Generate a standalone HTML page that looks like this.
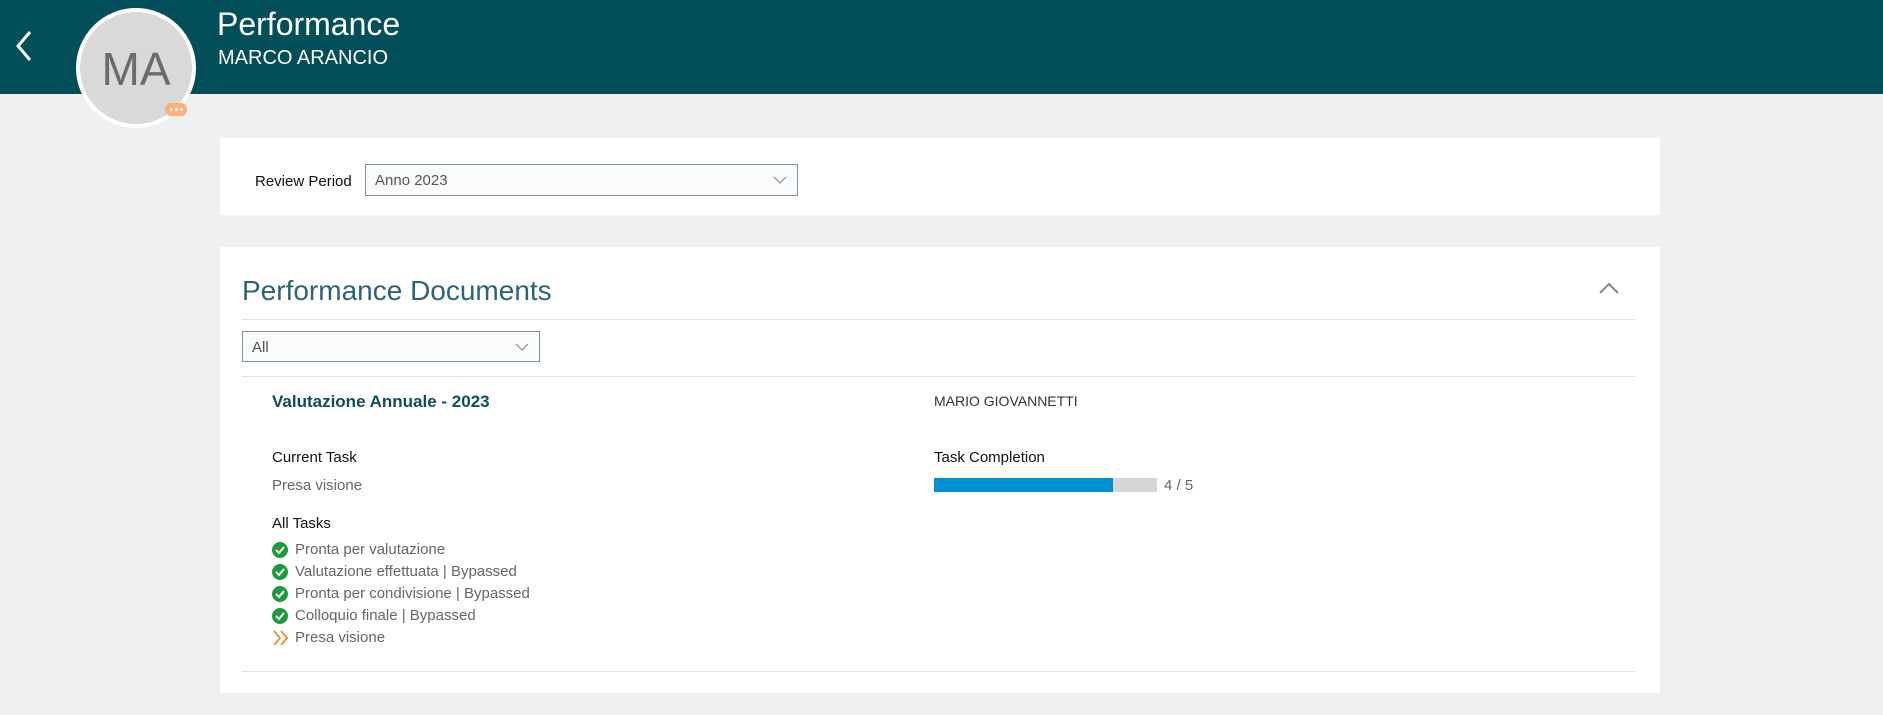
<!DOCTYPE html>
<html><head><meta charset="utf-8"><style>
*{margin:0;padding:0;box-sizing:border-box}
body{width:1883px;height:715px;background:#f0f0f0;font-family:"Liberation Sans",sans-serif;position:relative;overflow:hidden;color:#333}
.hdr{position:absolute;left:0;top:0;width:1883px;height:94px;background:#024f59}
.abs{position:absolute}
.avatar{left:76px;top:8px;width:120px;height:120px;border-radius:50%;background:#d9d9d9;border:4px solid #fff;text-align:center;line-height:114px;font-size:46px;color:#6b6b6b}
.badge{left:165px;top:103px;width:22px;height:13px;border-radius:6px;background:#f7b27d}
.badge i{position:absolute;top:5px;width:3px;height:3px;border-radius:50%;background:#fff}
.card{position:absolute;left:220px;width:1440px;background:#fff}
.sel{position:absolute;border:1px solid #7f939b;background:#f9fbfd;font-size:15px;color:#555;padding-left:9px}
.sel svg{position:absolute;right:10px;top:50%;margin-top:-4px}
.hr{position:absolute;left:22px;width:1394px;height:1px;background:#dde2e6}
.task{position:absolute;left:75px;font-size:15px;color:#666}
.ic{position:absolute;left:-23px;top:1px}
</style></head><body>
<div class="hdr"></div>
<svg class="abs" style="left:14px;top:30px" width="20" height="32"><path d="M16 2 L4 16 L16 30" fill="none" stroke="#fff" stroke-width="3"/></svg>
<div class="abs avatar">MA</div>
<div class="abs badge"><i style="left:5px"></i><i style="left:10px"></i><i style="left:15px"></i></div>
<div class="abs" style="left:217px;top:6px;font-size:32px;color:#fff">Performance</div>
<div class="abs" style="left:218px;top:47px;font-size:20px;color:#fff">MARCO ARANCIO</div>

<div class="card" style="top:138px;height:77px">
  <div class="abs" style="left:35px;top:35px;font-size:15px;color:#111">Review Period</div>
  <div class="sel" style="left:145px;top:26px;width:433px;height:32px;line-height:32px">Anno 2023<svg width="14" height="8"><path d="M1 1 L7 7 L13 1" fill="none" stroke="#999" stroke-width="1.3"/></svg></div>
</div>

<div class="card" style="top:247px;height:446px">
  <div class="abs" style="left:22px;top:28px;font-size:28px;color:#2b6472">Performance Documents</div>
  <svg class="abs" style="left:1379px;top:35px" width="20" height="12"><path d="M1 11 L10 2 L19 11" fill="none" stroke="#888" stroke-width="2"/></svg>
  <div class="hr" style="top:72px"></div>
  <div class="sel" style="left:22px;top:84px;width:298px;height:31px;line-height:32px">All<svg width="14" height="8"><path d="M1 1 L7 7 L13 1" fill="none" stroke="#999" stroke-width="1.3"/></svg></div>
  <div class="hr" style="top:129px"></div>
  <div class="abs" style="left:52px;top:145px;font-size:17px;color:#0f4d5a;font-weight:bold">Valutazione Annuale - 2023</div>
  <div class="abs" style="left:714px;top:146px;font-size:14px;color:#333">MARIO GIOVANNETTI</div>
  <div class="abs" style="left:52px;top:202px;font-size:15px;color:#111">Current Task</div>
  <div class="abs" style="left:52px;top:230px;font-size:15px;color:#666">Presa visione</div>
  <div class="abs" style="left:714px;top:202px;font-size:15px;color:#111">Task Completion</div>
  <div class="abs" style="left:714px;top:231px;width:223px;height:14px;background:#d6d6d6"><div style="width:179px;height:14px;background:#0090d4"></div></div>
  <div class="abs" style="left:944px;top:230px;font-size:15px;color:#666">4 / 5</div>
  <div class="abs" style="left:52px;top:268px;font-size:15px;color:#111">All Tasks</div>
  <div class="task" style="top:294px"><svg class="ic" width="16" height="16"><circle cx="8" cy="8" r="8" fill="#1e9a3a"/><path d="M4 8 L7 11 L12 5" fill="none" stroke="#fff" stroke-width="2"/></svg>Pronta per valutazione</div>
  <div class="task" style="top:316px"><svg class="ic" width="16" height="16"><circle cx="8" cy="8" r="8" fill="#1e9a3a"/><path d="M4 8 L7 11 L12 5" fill="none" stroke="#fff" stroke-width="2"/></svg>Valutazione effettuata | Bypassed</div>
  <div class="task" style="top:338px"><svg class="ic" width="16" height="16"><circle cx="8" cy="8" r="8" fill="#1e9a3a"/><path d="M4 8 L7 11 L12 5" fill="none" stroke="#fff" stroke-width="2"/></svg>Pronta per condivisione | Bypassed</div>
  <div class="task" style="top:360px"><svg class="ic" width="16" height="16"><circle cx="8" cy="8" r="8" fill="#1e9a3a"/><path d="M4 8 L7 11 L12 5" fill="none" stroke="#fff" stroke-width="2"/></svg>Colloquio finale | Bypassed</div>
  <div class="task" style="top:382px"><svg class="ic" width="18" height="16"><path d="M2 1 L8 8 L2 15 M9 1 L15 8 L9 15" fill="none" stroke="#d79a3c" stroke-width="2"/></svg>Presa visione</div>
  <div class="hr" style="top:424px"></div>
</div>
</body></html>
